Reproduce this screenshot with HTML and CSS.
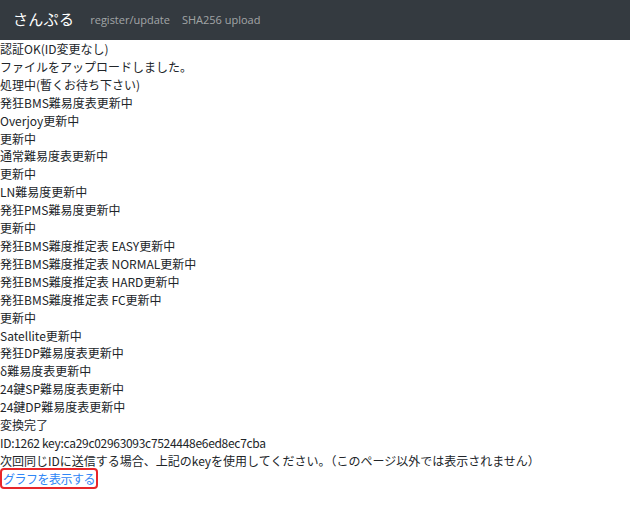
FILE: index.html
```html
<!DOCTYPE html>
<html lang="ja">
<head>
<meta charset="utf-8">
<title>さんぷる</title>
<link rel="stylesheet" href="styles.css">
</head>
<body>
<nav class="navbar">
  <span class="brand">さんぷる</span>
  <span class="nav-link">register/update</span>
  <span class="nav-link">SHA256 upload</span>
</nav>
<main class="log">
  <div>認証OK(ID変更なし)</div>
  <div>ファイルをアップロードしました。</div>
  <div>処理中(暫くお待ち下さい)</div>
  <div>発狂BMS難易度表更新中</div>
  <div>Overjoy更新中</div>
  <div>更新中</div>
  <div>通常難易度表更新中</div>
  <div>更新中</div>
  <div>LN難易度更新中</div>
  <div>発狂PMS難易度更新中</div>
  <div>更新中</div>
  <div>発狂BMS難度推定表 EASY更新中</div>
  <div>発狂BMS難度推定表 NORMAL更新中</div>
  <div>発狂BMS難度推定表 HARD更新中</div>
  <div>発狂BMS難度推定表 FC更新中</div>
  <div>更新中</div>
  <div>Satellite更新中</div>
  <div>発狂DP難易度表更新中</div>
  <div>δ難易度表更新中</div>
  <div>24鍵SP難易度表更新中</div>
  <div>24鍵DP難易度表更新中</div>
  <div>変換完了</div>
  <div class="key-line">ID:1262 key:ca29c02963093c7524448e6ed8ec7cba</div>
  <div>次回同じIDに送信する場合、上記のkeyを使用してください。（このページ以外では表示されません）</div>
  <div class="link-row"><a class="graph-link" href="#">グラフを表示する</a></div>
</main>
</body>
</html>
```
FILE: styles.css
```css
html, body {
  margin: 0;
  padding: 0;
  background: #ffffff;
}
body {
  font-family: "Noto Sans CJK JP", sans-serif;
  font-size: 12px;
  line-height: 17.9px;
  color: #212529;
}
.navbar {
  height: 40px;
  background: #343a40;
  display: flex;
  align-items: center;
  padding: 0 0 0 13px;
  box-sizing: border-box;
  font-family: "Open Sans", "Noto Sans CJK JP", sans-serif;
}
.brand {
  color: #ffffff;
  font-size: 15px;
  margin-right: 16px;
  letter-spacing: 0.3px;
}
.nav-link {
  color: rgba(255, 255, 255, 0.55);
  font-size: 11px;
  margin-right: 12px;
}
.log {
  padding-top: 0;
}
.key-line {
  letter-spacing: -0.3px;
}
.link-row {
  margin-top: -2px;
}
.graph-link {
  display: inline-block;
  color: #2f86f6;
  text-decoration: none;
  border: 2px solid #e8262a;
  border-radius: 4px;
  padding: 0 1px 0 1px;
  letter-spacing: -0.5px;
  line-height: 17px;
}
```
